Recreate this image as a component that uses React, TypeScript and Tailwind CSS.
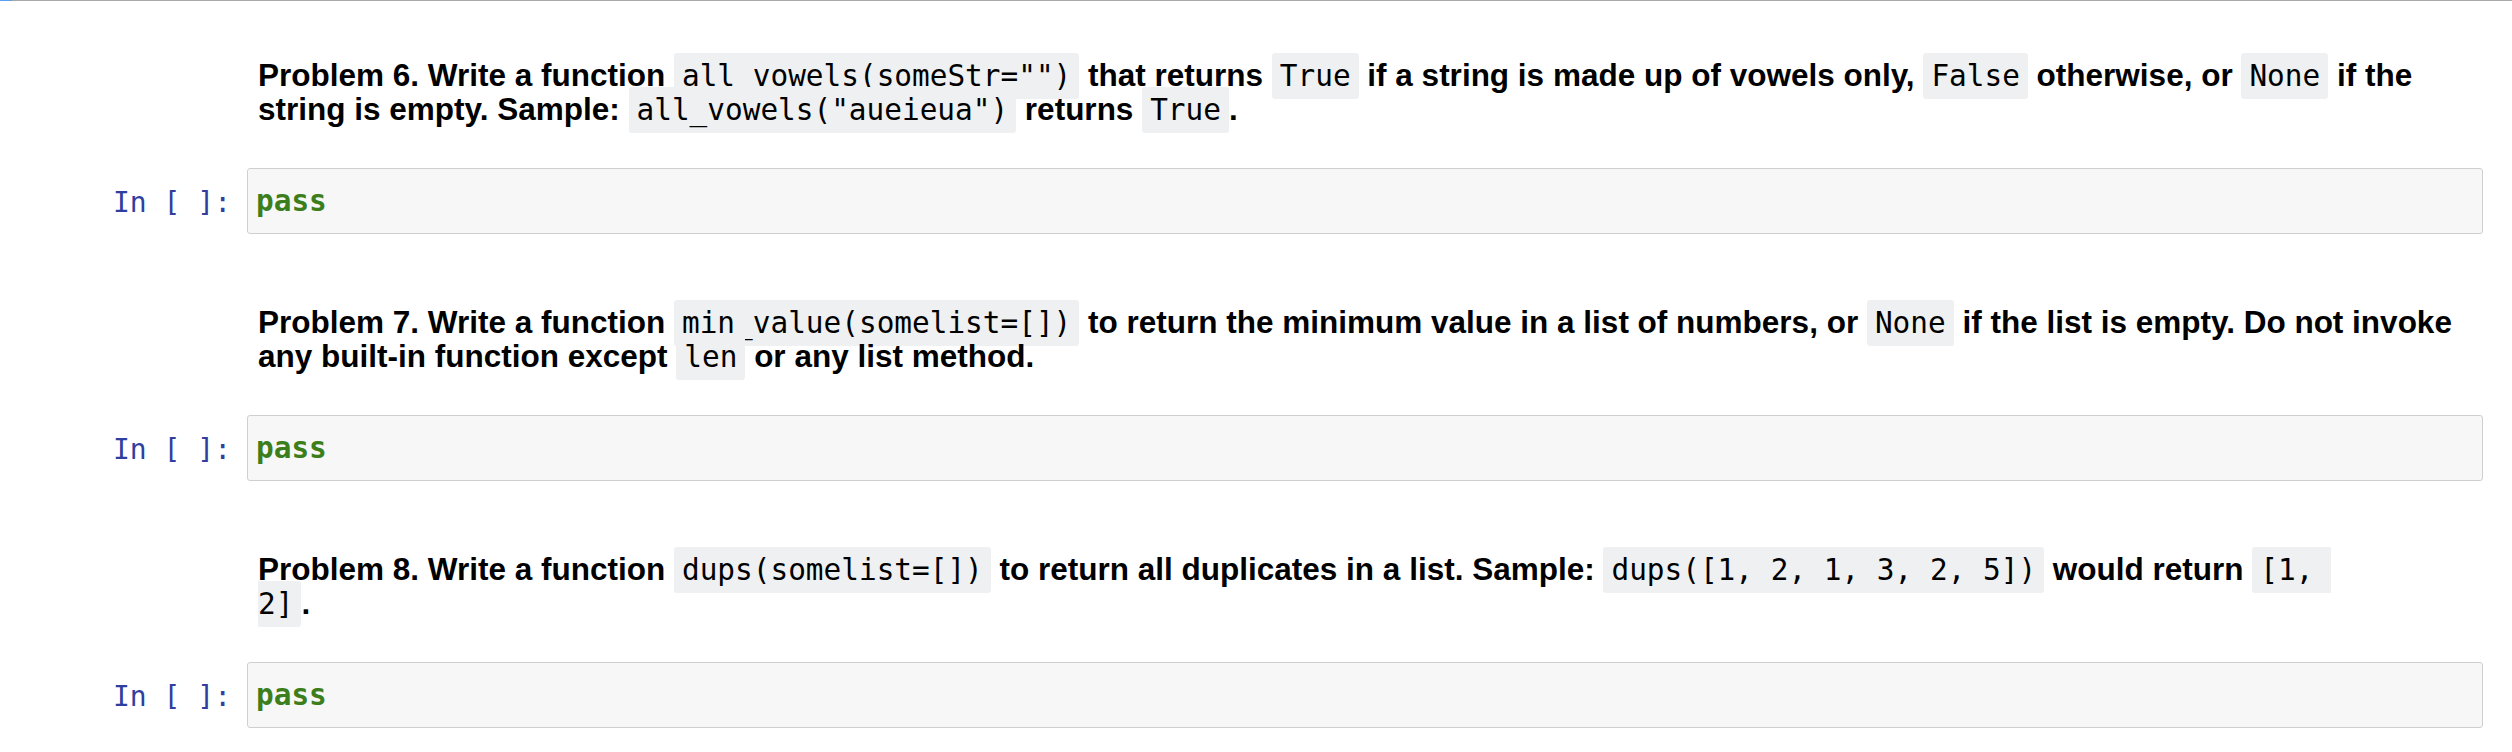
import React from 'react';

const mono = "font-['DejaVu_Sans_Mono','Liberation_Mono',monospace]";

function Code({ children }: { children: React.ReactNode }) {
    return (
        <code className={`${mono} text-[29.4px] font-normal text-black bg-[#eff0f1] rounded-[3px] px-[8px] py-[6px] leading-[20px]`}>
            {children}
        </code>
    );
}

function Markdown({ children }: { children: React.ReactNode }) {
    return (
        <div className="flex mb-[42px]">
            <div className="w-[247px] shrink-0" />
            <p className="flex-1 pl-[11px] pr-[11px] h-[68px] font-['Liberation_Sans',Arial,sans-serif] font-bold text-[31.5px] leading-[34px] text-black whitespace-nowrap">
                {children}
            </p>
        </div>
    );
}

function CodeCell({ code }: { code: string }) {
    return (
        <div className="flex items-start mb-[71px]">
            {/* prompt */}
            <div className={`w-[247px] shrink-0 pr-[16px] pt-[17px] text-right ${mono} text-[28px] leading-[35px] text-[#303f9f] whitespace-pre`}>
                In [ ]:
            </div>
            <div className="flex-1 h-[66px] border border-[#cfcfcf] rounded-[3px] bg-[#f7f7f7] pl-[8px] pt-[15px]">
                <pre className={`${mono} text-[29.4px] leading-[35.7px] font-bold text-[#3d7e1c]`}>{code}</pre>
            </div>
        </div>
    );
}

export default function App() {
    return (
        <div className="w-full min-h-[752px] bg-white">
            {/* top rule */}
            <div className="flex h-px">
                <div className="w-[12px] bg-[#5b9cf4]" />
                <div className="flex-1 bg-[#a9a9a9]" />
            </div>

            <div className="pt-[57px] pr-[29px]">
                <Markdown>
                    Problem 6. Write a function <Code>all_vowels(someStr="")</Code> that returns <Code>True</Code> if a string is made up of vowels only, <Code>False</Code> otherwise, or <Code>None</Code> if the
                    <br />
                    string is empty. Sample: <Code>all_vowels("aueieua")</Code> returns <Code>True</Code>.
                </Markdown>
                <CodeCell code="pass" />

                <Markdown>
                    Problem 7. Write a function <Code>min_value(somelist=[])</Code> to return the minimum value in a list of numbers, or <Code>None</Code> if the list is empty. Do not invoke
                    <br />
                    any built-in function except <Code>len</Code> or any list method.
                </Markdown>
                <CodeCell code="pass" />

                <Markdown>
                    Problem 8. Write a function <Code>dups(somelist=[])</Code> to return all duplicates in a list. Sample: <Code>dups([1, 2, 1, 3, 2, 5])</Code> would return <Code>[1,{'\u00a0'}<br />2]</Code>.
                </Markdown>
                <CodeCell code="pass" />
            </div>
        </div>
    );
}
